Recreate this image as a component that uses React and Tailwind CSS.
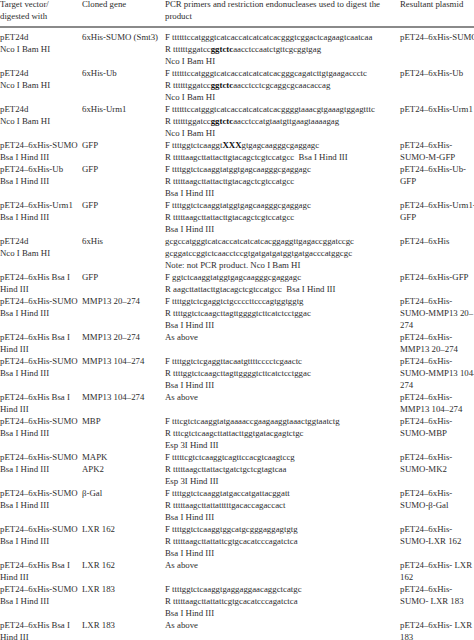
import React from "react";

const B = ({ children }) => <b className="font-bold text-[#111]">{children}</b>;

const rows = [
  {
    vector: ["pET24d", "Nco I Bam HI"],
    gene: ["6xHis-SUMO (Smt3)"],
    primers: [
      "F ttttttccatgggtcatcaccatcatcatcacgggtcggactcagaagtcaatcaa",
      <>R ttttttggatcc<B>ggtctc</B>aacctccaatctgttcgcggtgag</>,
      "Nco I Bam HI",
    ],
    plasmid: ["pET24–6xHis-SUMO"],
  },
  {
    vector: ["pET24d", "Nco I Bam HI"],
    gene: ["6xHis-Ub"],
    primers: [
      "F ttttttccatgggtcatcaccatcatcatcacgggcagatcttgtgaagaccctc",
      <>R ttttttggatcc<B>ggtctc</B>aacctcctcgcaggcgcaacaccag</>,
      "Nco I Bam HI",
    ],
    plasmid: ["pET24–6xHis-Ub"],
  },
  {
    vector: ["pET24d", "Nco I Bam HI"],
    gene: ["6xHis-Urm1"],
    primers: [
      "F ttttttccatgggtcatcaccatcatcatcacggggtaaacgtgaaagtggagtttc",
      <>R ttttttggatcc<B>ggtctc</B>aacctccatgtaatgttgaagtaaaagag</>,
      "Nco I Bam HI",
    ],
    plasmid: ["pET24–6xHis-Urm1"],
  },
  {
    vector: ["pET24–6xHis-SUMO", "Bsa I Hind III"],
    gene: ["GFP"],
    primers: [
      <>F ttttggtctcaaggt<B>XXX</B>gtgagcaagggcgaggagc</>,
      "R tttttaagcttattacttgtacagctcgtccatgcc  Bsa I Hind III",
    ],
    plasmid: ["pET24–6xHis-", "SUMO-M-GFP"],
  },
  {
    vector: ["pET24–6xHis-Ub", "Bsa I Hind III"],
    gene: ["GFP"],
    primers: [
      "F ttttggtctcaaggtatggtgagcaagggcgaggagc",
      "R tttttaagcttattacttgtacagctcgtccatgcc",
      "Bsa I Hind III",
    ],
    plasmid: ["pET24–6xHis-Ub-", "GFP"],
  },
  {
    vector: ["pET24–6xHis-Urm1", "Bsa I Hind III"],
    gene: ["GFP"],
    primers: [
      "F ttttggtctcaaggtatggtgagcaagggcgaggagc",
      "R tttttaagcttattacttgtacagctcgtccatgcc",
      "Bsa I Hind III",
    ],
    plasmid: ["pET24–6xHis-Urm1-", "GFP"],
  },
  {
    vector: ["pET24d", "Nco I Bam HI"],
    gene: ["6xHis"],
    primers: [
      "gcgccatgggtcatcaccatcatcatcacggaggttgagaccggatccgc",
      "gcggatccggtctcaacctccgtgatgatgatggtgatgacccatggcgc",
      "Note: not PCR product. Nco I Bam HI",
    ],
    plasmid: ["pET24–6xHis"],
  },
  {
    vector: ["pET24–6xHis Bsa I", "Hind III"],
    gene: ["GFP"],
    primers: [
      "F ggtctcaaggtatggtgagcaagggcgaggagc",
      "R aagcttattacttgtacagctcgtccatgcc  Bsa I Hind III",
    ],
    plasmid: ["pET24–6xHis-GFP"],
  },
  {
    vector: ["pET24–6xHis-SUMO", "Bsa I Hind III"],
    gene: ["MMP13 20–274"],
    primers: [
      "F ttttggtctcgaggtctgccccttcccagtggtggtg",
      "R ttttggtctcaagcttagttggggtcttcatctcctggac",
      "Bsa I Hind III",
    ],
    plasmid: ["pET24–6xHis-", "SUMO-MMP13 20–", "274"],
  },
  {
    vector: ["pET24–6xHis Bsa I", "Hind III"],
    gene: ["MMP13 20–274"],
    primers: ["As above"],
    plasmid: ["pET24–6xHis-", "MMP13 20–274"],
  },
  {
    vector: ["pET24–6xHis-SUMO", "Bsa I Hind III"],
    gene: ["MMP13 104–274"],
    primers: [
      "F ttttggtctcgaggttacaatgttttcccctcgaactc",
      "R ttttggtctcaagcttagttggggtcttcatctcctggac",
      "Bsa I Hind III",
    ],
    plasmid: ["pET24–6xHis-", "SUMO-MMP13 104–", "274"],
  },
  {
    vector: ["pET24–6xHis Bsa I", "Hind III"],
    gene: ["MMP13 104–274"],
    primers: ["As above"],
    plasmid: ["pET24–6xHis-", "MMP13 104–274"],
  },
  {
    vector: ["pET24–6xHis-SUMO", "Bsa I Hind III"],
    gene: ["MBP"],
    primers: [
      "F tttcgtctcaaggtatgaaaaccgaagaaggtaaactggtaatctg",
      "R tttcgtctcaagcttattacttggtgatacgagtctgc",
      "Esp 3I Hind III",
    ],
    plasmid: ["pET24–6xHis-", "SUMO-MBP"],
  },
  {
    vector: ["pET24–6xHis-SUMO", "Bsa I Hind III"],
    gene: ["MAPK", "APK2"],
    primers: [
      "F tttttcgtctcaaggtcagttccacgtcaagtccg",
      "R tttttaagcttattactgatctgctcgtagtcaa",
      "Esp 3I Hind III",
    ],
    plasmid: ["pET24–6xHis-", "SUMO-MK2"],
  },
  {
    vector: ["pET24–6xHis-SUMO", "Bsa I Hind III"],
    gene: ["β-Gal"],
    primers: [
      "F ttttggtctcaaggtatgaccatgattacggatt",
      "R tttttaagcttattatttttgacaccagaccact",
      "Bsa I Hind III",
    ],
    plasmid: ["pET24–6xHis-", "SUMO-β-Gal"],
  },
  {
    vector: ["pET24–6xHis-SUMO", "Bsa I Hind III"],
    gene: ["LXR 162"],
    primers: [
      "F ttttggtctcaaggtggcatgcgggaggagtgtg",
      "R tttttaagcttattattcgtgcacatcccagatctca",
      "Bsa I Hind III",
    ],
    plasmid: ["pET24–6xHis-", "SUMO-LXR 162"],
  },
  {
    vector: ["pET24–6xHis Bsa I", "Hind III"],
    gene: ["LXR 162"],
    primers: ["As above"],
    plasmid: ["pET24–6xHis- LXR", "162"],
  },
  {
    vector: ["pET24–6xHis-SUMO", "Bsa I Hind III"],
    gene: ["LXR 183"],
    primers: [
      "F ttttggtctcaaggtgaggaggaacaggctcatgc",
      "R tttttaagcttattattcgtgcacatcccagatctca",
      "Bsa I Hind III",
    ],
    plasmid: ["pET24–6xHis-", "SUMO- LXR 183"],
  },
  {
    vector: ["pET24–6xHis Bsa I", "Hind III"],
    gene: ["LXR 183"],
    primers: ["As above"],
    plasmid: ["pET24–6xHis- LXR", "183"],
  },
];

const Cell = ({ lines }) => (
  <div className="flex flex-col">
    {lines.map((l, i) => (
      <div key={i} className="h-[12px] whitespace-pre">
        {l}
      </div>
    ))}
  </div>
);

const cols = "grid grid-cols-[82px_83px_235px_120px]";

export default function App() {
  return (
    <div
      className="w-[474px] h-[640px] overflow-hidden bg-white text-[#2e2e2e] text-[8.8px] leading-[12px]"
      style={{ fontFamily: '"Liberation Serif", "Times New Roman", serif' }}
    >
      <div className="-mt-[2px]">
        {/* header */}
        <div className={cols + " pb-[4px]"}>
          <Cell lines={["Target vector/", "digested with"]} />
          <Cell lines={["Cloned gene"]} />
          <Cell lines={["PCR primers and restriction endonucleases used to digest the", "product"]} />
          <Cell lines={["Resultant plasmid"]} />
        </div>
        <div className="h-[2px] bg-[#8a8a8a] w-[474px]" />
        <div className="pt-[3px]">
          {rows.map((r, i) => (
            <div key={i} className={cols}>
              <Cell lines={r.vector} />
              <Cell lines={r.gene} />
              <Cell lines={r.primers} />
              <Cell lines={r.plasmid} />
            </div>
          ))}
        </div>
      </div>
    </div>
  );
}
